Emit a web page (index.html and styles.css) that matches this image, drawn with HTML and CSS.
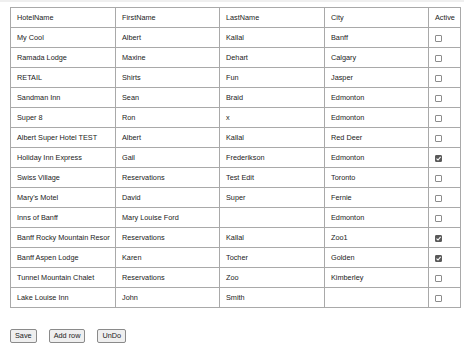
FILE: index.html
```html
<!DOCTYPE html>
<html>
<head>
<meta charset="utf-8">
<link rel="stylesheet" href="styles.css">
</head>
<body>
<div class="topband"></div>
<div class="page">
  <table class="grid">
    <colgroup>
      <col class="c-hotel"><col class="c-first"><col class="c-last"><col class="c-city"><col class="c-active">
    </colgroup>
    <thead>
      <tr><th><div class="cell">HotelName</div></th><th><div class="cell">FirstName</div></th><th><div class="cell">LastName</div></th><th><div class="cell">City</div></th><th><div class="cell">Active</div></th></tr>
    </thead>
    <tbody>
      <tr><td><div class="cell">My Cool</div></td><td><div class="cell">Albert</div></td><td><div class="cell">Kallal</div></td><td><div class="cell">Banff</div></td><td><span class="cb"></span></td></tr>
      <tr><td><div class="cell">Ramada Lodge</div></td><td><div class="cell">Maxine</div></td><td><div class="cell">Dehart</div></td><td><div class="cell">Calgary</div></td><td><span class="cb"></span></td></tr>
      <tr><td><div class="cell">RETAIL</div></td><td><div class="cell">Shirts</div></td><td><div class="cell">Fun</div></td><td><div class="cell">Jasper</div></td><td><span class="cb"></span></td></tr>
      <tr><td><div class="cell">Sandman Inn</div></td><td><div class="cell">Sean</div></td><td><div class="cell">Braid</div></td><td><div class="cell">Edmonton</div></td><td><span class="cb"></span></td></tr>
      <tr><td><div class="cell">Super 8</div></td><td><div class="cell">Ron</div></td><td><div class="cell">x</div></td><td><div class="cell">Edmonton</div></td><td><span class="cb"></span></td></tr>
      <tr><td><div class="cell">Albert Super Hotel TEST</div></td><td><div class="cell">Albert</div></td><td><div class="cell">Kallal</div></td><td><div class="cell">Red Deer</div></td><td><span class="cb"></span></td></tr>
      <tr><td><div class="cell">Holiday Inn Express</div></td><td><div class="cell">Gail</div></td><td><div class="cell">Frederikson</div></td><td><div class="cell">Edmonton</div></td><td><span class="cb checked"><svg viewBox="0 0 7 7" width="7" height="7"><path d="M1.5 3.6 L3 5 L5.6 1.8" fill="none" stroke="#fff" stroke-width="1.1"/></svg></span></td></tr>
      <tr><td><div class="cell">Swiss Village</div></td><td><div class="cell">Reservations</div></td><td><div class="cell">Test Edit</div></td><td><div class="cell">Toronto</div></td><td><span class="cb"></span></td></tr>
      <tr><td><div class="cell">Mary's Motel</div></td><td><div class="cell">David</div></td><td><div class="cell">Super</div></td><td><div class="cell">Fernie</div></td><td><span class="cb"></span></td></tr>
      <tr><td><div class="cell">Inns of Banff</div></td><td><div class="cell">Mary Louise Ford</div></td><td><div class="cell"></div></td><td><div class="cell">Edmonton</div></td><td><span class="cb"></span></td></tr>
      <tr><td><div class="cell">Banff Rocky Mountain Resort</div></td><td><div class="cell">Reservations</div></td><td><div class="cell">Kallal</div></td><td><div class="cell">Zoo1</div></td><td><span class="cb checked"><svg viewBox="0 0 7 7" width="7" height="7"><path d="M1.5 3.6 L3 5 L5.6 1.8" fill="none" stroke="#fff" stroke-width="1.1"/></svg></span></td></tr>
      <tr><td><div class="cell">Banff Aspen Lodge</div></td><td><div class="cell">Karen</div></td><td><div class="cell">Tocher</div></td><td><div class="cell">Golden</div></td><td><span class="cb checked"><svg viewBox="0 0 7 7" width="7" height="7"><path d="M1.5 3.6 L3 5 L5.6 1.8" fill="none" stroke="#fff" stroke-width="1.1"/></svg></span></td></tr>
      <tr><td><div class="cell">Tunnel Mountain Chalet</div></td><td><div class="cell">Reservations</div></td><td><div class="cell">Zoo</div></td><td><div class="cell">Kimberley</div></td><td><span class="cb"></span></td></tr>
      <tr><td><div class="cell">Lake Louise Inn</div></td><td><div class="cell">John</div></td><td><div class="cell">Smith</div></td><td><div class="cell"></div></td><td><span class="cb"></span></td></tr>
    </tbody>
  </table>
  <div class="actions">
    <button class="btn">Save</button>
    <button class="btn">Add row</button>
    <button class="btn">UnDo</button>
  </div>
</div>
</body>
</html>
```
FILE: styles.css
```css
html, body {
  margin: 0;
  padding: 0;
  background: #fff;
}
body {
  font-family: "Liberation Sans", Arial, sans-serif;
  font-size: 7.3px;
  color: #222;
}
.topband {
  height: 2px;
  background: #efefef;
  margin-right: 10px;
}
.page {
  padding: 5px 0 0 10px;
}
.grid {
  border-collapse: collapse;
  table-layout: fixed;
  width: 450px;
  border: 1px solid #a9a9a9;
}
.c-hotel { width: 105px; }
.c-first { width: 104px; }
.c-last { width: 105px; }
.c-city { width: 104px; }
.c-active { width: 32px; }
.grid th, .grid td {
  border: 1px solid #a9a9a9;
  height: 19px;
  padding: 0 5px 0 5px;
  font-weight: normal;
  text-align: left;
  vertical-align: middle;
}
.cell {
  overflow: hidden;
  white-space: nowrap;
  line-height: 10px;
  padding-left: 1px;
}
.cb {
  display: block;
  width: 5px;
  height: 5px;
  margin-left: 1px;
  margin-top: 1px;
  border: 1px solid #8c8c8c;
  border-radius: 1px;
  background: #fff;
  position: relative;
}
.cb.checked {
  background: #5a5a5a;
  border-color: #5a5a5a;
}
.cb svg {
  position: absolute;
  left: -1px;
  top: -1px;
}
.actions {
  display: flex;
  gap: 12px;
  margin-top: 21px;
}
.btn {
  font-family: "Liberation Sans", Arial, sans-serif;
  font-size: 7.3px;
  color: #222;
  height: 14px;
  padding: 0 4px;
  background: #efefef;
  border: 1px solid #8a8a8a;
  border-radius: 2px;
  line-height: 12px;
}
```
